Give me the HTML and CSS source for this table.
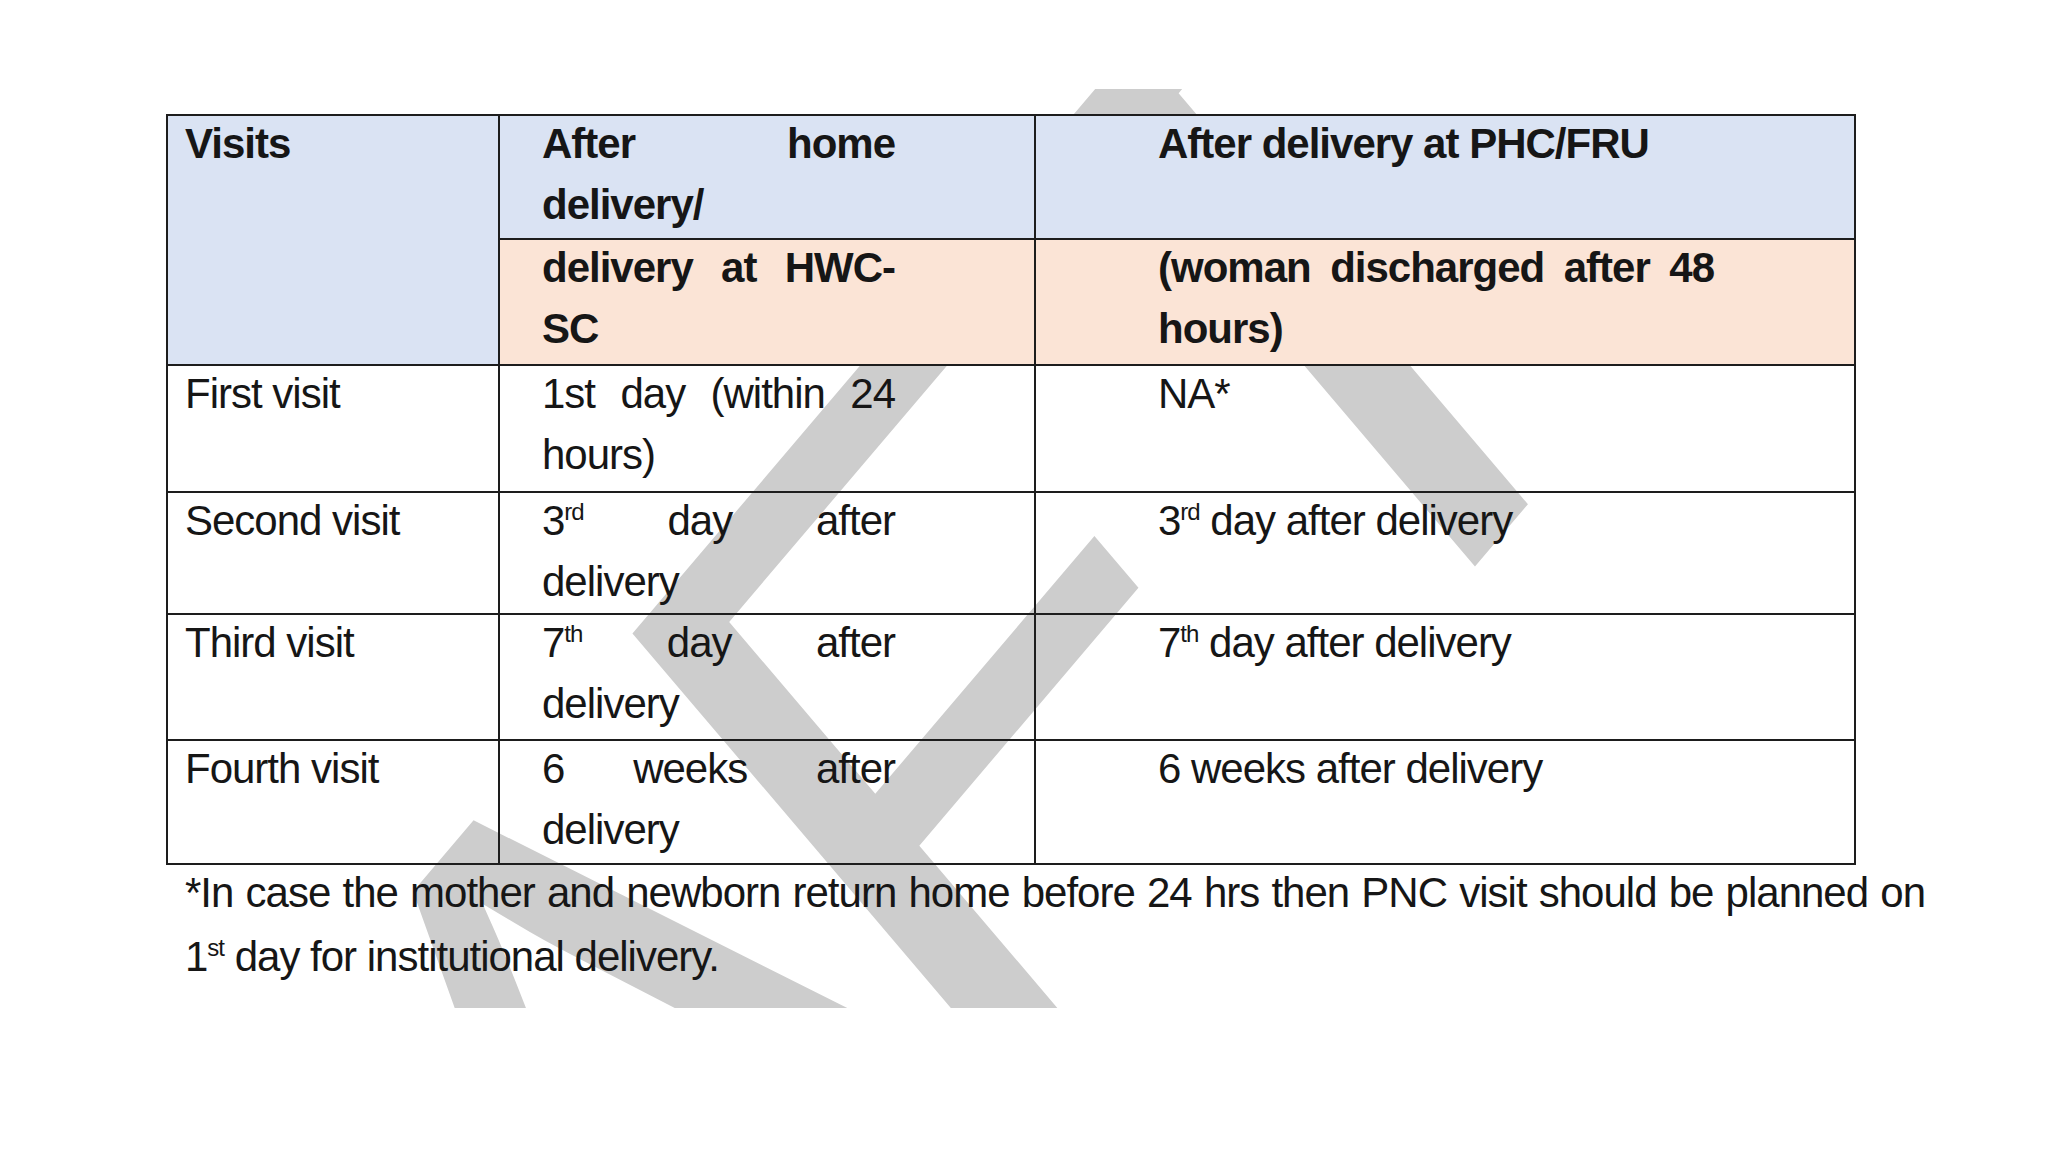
FILE: index.html
```html
<!DOCTYPE html>
<html lang="en">
<head>
<meta charset="utf-8">
<title>PNC visits</title>
<link rel="stylesheet" href="styles.css">
</head>
<body>
<div class="page">
  <svg class="watermark" viewBox="0 0 2048 1152" width="2048" height="1152" aria-hidden="true">
    <defs>
      <clipPath id="wmclip"><rect x="0" y="89" width="2048" height="919"/></clipPath>
    </defs>
    <g clip-path="url(#wmclip)">
      <g transform="translate(1676 330) scale(0.85 1) rotate(-45)">
        <text x="0" y="0" text-anchor="end" class="wm-text">DRA<tspan dx="-78">FT</tspan></text>
      </g>
    </g>
  </svg>

  <table class="visits">
    <colgroup>
      <col class="col-visit">
      <col class="col-home">
      <col class="col-phc">
    </colgroup>
    <thead>
      <tr class="row-h1">
        <th rowspan="2" class="cell head blue c1"><div class="txt">Visits</div></th>
        <th class="cell head blue c2"><div class="txt w2"><span class="jl">After home</span><span class="ln">delivery/</span></div></th>
        <th class="cell head blue c3"><div class="txt w3">After delivery at PHC/FRU</div></th>
      </tr>
      <tr class="row-h2">
        <th class="cell head peach c2"><div class="txt w2"><span class="jl">delivery at HWC-</span><span class="ln">SC</span></div></th>
        <th class="cell head peach c3"><div class="txt w3"><span class="jl">(woman discharged after 48</span><span class="ln">hours)</span></div></th>
      </tr>
    </thead>
    <tbody>
      <tr class="row-1">
        <td class="cell c1"><div class="txt">First visit</div></td>
        <td class="cell c2"><div class="txt w2"><span class="jl">1st day (within 24</span><span class="ln">hours)</span></div></td>
        <td class="cell c3"><div class="txt w3">NA*</div></td>
      </tr>
      <tr class="row-2">
        <td class="cell c1"><div class="txt">Second visit</div></td>
        <td class="cell c2"><div class="txt w2"><span class="jl">3<sup class="sup">rd</sup> day after</span><span class="ln">delivery</span></div></td>
        <td class="cell c3"><div class="txt w3">3<sup class="sup">rd</sup> day after delivery</div></td>
      </tr>
      <tr class="row-3">
        <td class="cell c1"><div class="txt">Third visit</div></td>
        <td class="cell c2"><div class="txt w2"><span class="jl">7<sup class="sup">th</sup> day after</span><span class="ln">delivery</span></div></td>
        <td class="cell c3"><div class="txt w3">7<sup class="sup">th</sup> day after delivery</div></td>
      </tr>
      <tr class="row-4">
        <td class="cell c1"><div class="txt">Fourth visit</div></td>
        <td class="cell c2"><div class="txt w2"><span class="jl">6 weeks after</span><span class="ln">delivery</span></div></td>
        <td class="cell c3"><div class="txt w3">6 weeks after delivery</div></td>
      </tr>
    </tbody>
  </table>

  <p class="note"><span class="jl">*In case the mother and newborn return home before 24 hrs then PNC visit should be planned on</span><span class="ln">1<sup class="sup">st</sup> day for institutional delivery.</span></p>
</div>
</body>
</html>
```

FILE: styles.css
```css
html, body {
  margin: 0;
  padding: 0;
  background: #ffffff;
}

body {
  font-family: "Liberation Sans", Arial, sans-serif;
  font-size: 42px;
  letter-spacing: -1px;
  color: #161616;
}

.page {
  position: relative;
  width: 2048px;
  height: 1152px;
  overflow: hidden;
  box-sizing: border-box;
  padding: 114px 0 0 166px;
}

.watermark {
  position: absolute;
  left: 0;
  top: 0;
  z-index: 0;
}

.wm-text {
  font-family: "Liberation Sans", Arial, sans-serif;
  font-weight: normal;
  font-size: 950px;
  letter-spacing: 0;
  fill: #cdcdcd;
}

.visits {
  position: relative;
  z-index: 1;
  border-collapse: collapse;
  table-layout: fixed;
  width: 1688px;
}

.col-visit { width: 332px; }
.col-home { width: 536px; }
.col-phc { width: 820px; }

.cell {
  border: 2px solid #1d1d1d;
  padding: 0;
  vertical-align: top;
  text-align: left;
  font-weight: normal;
}

.head { font-weight: bold; }
.blue { background: #dae3f3; }
.peach { background: #fbe4d6; }

.c1 { padding-left: 17px; }
.c2 { padding-left: 42px; }
.c3 { padding-left: 122px; }

.row-h1 { height: 124px; }
.row-h2 { height: 126px; }
.row-1 { height: 127px; }
.row-2 { height: 122px; }
.row-3 { height: 126px; }
.row-4 { height: 124px; }

.txt {
  line-height: 61px;
  margin-top: -3px;
}

.w2 { width: 353px; }
.w3 { width: 556px; }

.jl {
  display: block;
  text-align: justify;
  text-align-last: justify;
}

.ln { display: block; }

.sup {
  font-size: 24px;
  line-height: 0;
  vertical-align: 15px;
}

.note {
  position: relative;
  z-index: 1;
  width: 1740px;
  margin: -4px 0 0 19px;
  line-height: 64px;
}
```
